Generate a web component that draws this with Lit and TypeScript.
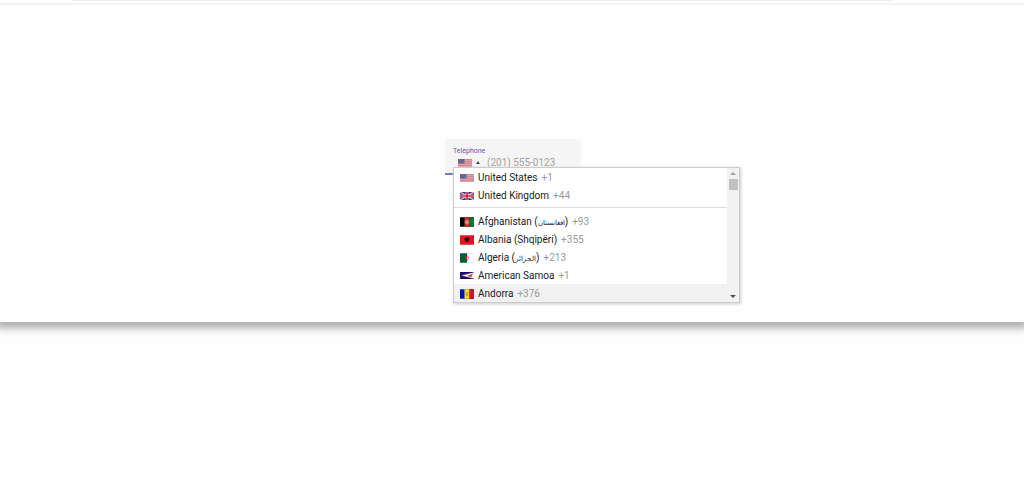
import { LitElement, html, css, svg } from "lit";
import { customElement, state } from "lit/decorators.js";
import { classMap } from "lit/directives/class-map.js";

const flags: Record<string, unknown> = {
  us: svg`<rect width="28" height="16" fill="#e0a0aa"/><path d="M0 1h28M0 5h28M0 9h28M0 13h28" stroke="#d07c8a" stroke-width="1.6"/><rect width="13" height="9" fill="#66668f"/>`,
  gb: svg`<rect width="28" height="16" fill="#29337a"/><path d="M0 0L28 16M28 0L0 16" stroke="#fff" stroke-width="2.600"/><path d="M0 0L28 16M28 0L0 16" stroke="#d8294a" stroke-width="1"/><path d="M14 0V16M0 8H28" stroke="#fff" stroke-width="5.200"/><path d="M14 0V16M0 8H28" stroke="#d01c36" stroke-width="3.2"/>`,
  af: svg`<rect width="28" height="19" fill="#000"/><rect x="9" width="10" height="19" fill="#c8301c"/><rect x="19" width="9" height="19" fill="#007a36"/><circle cx="14" cy="9.5" r="4" fill="none" stroke="#e7a79c" stroke-width="1.4"/><path d="M12 8h4v4h-4z" fill="#e7a79c"/>`,
  al: svg`<rect width="28" height="19" fill="#e8121e"/><path d="M13 5l-2-1-1 1 1 1-3 0 1 2 1 3 2-1-1 3 2 0 1 2 1-2 2 0-1-3 2 1 1-3 1-2-3 0 1-1-1-1-2 1-1 1z" fill="#2a0806"/>`,
  dz: svg`<rect width="28" height="19" fill="#fff"/><rect width="14" height="19" fill="#006233"/><path d="M17.500 5.300A5 5 0 1 0 17.500 13.700A4 4 0 1 1 17.500 5.300z" fill="#d21034"/><path d="M14.500 9.500l4-1.300-2.400 3.400V7.400l2.400 3.400z" fill="#d21034"/><path d="M14 .5H27.500V18.500H14" fill="none" stroke="#ddd"/>`,
  as: svg`<rect width="28" height="14" fill="#10106e"/><path d="M28 0L0 7l28 7z" fill="#c5203a"/><path d="M28 1.200L4 7l24 5.800z" fill="#fff"/><path d="M15 6l5 0 5-3 1 1-3 3 2 1-3 2-3-1-4 0 2-1z" fill="#8b5a3c"/>`,
  ad: svg`<rect width="28" height="19" fill="#0018a8"/><rect x="9" width="10" height="19" fill="#fedd00"/><rect x="19" width="9" height="19" fill="#d0103a"/><path d="M11.500 6h5v5q0 2-2.500 3-2.500-1-2.500-3z" fill="#c69a55"/>`,
};
const flagHeights: Record<string, number> = { us: 16, gb: 16, as: 14 };

const flag = (code: string) => {
  const h = flagHeights[code] ?? 19;
  return html`<svg class="flag" viewBox="0 0 28 ${h}" width="14" height=${Math.round(h / 2)} aria-hidden="true">${flags[code]}</svg>`;
};

interface Country {
  code: string;
  name: string;
  native?: string;
  dial: string;
}

const preferred: Country[] = [
  { code: "us", name: "United States", dial: "+1" },
  { code: "gb", name: "United Kingdom", dial: "+44" },
];
const countries: Country[] = [
  { code: "af", name: "Afghanistan", native: "افغانستان", dial: "+93" },
  { code: "al", name: "Albania", native: "Shqipëri", dial: "+355" },
  { code: "dz", name: "Algeria", native: "الجزائر", dial: "+213" },
  { code: "as", name: "American Samoa", dial: "+1" },
  { code: "ad", name: "Andorra", dial: "+376" },
];

@customElement("app-root")
export class AppRoot extends LitElement {
  @state() private active = "ad";
  @state() private open = true;

  static styles = css`
    :host {
      display: block;
      min-height: 100vh;
      background: #fefefe;
      font: 10px/18px Roboto, "Liberation Sans", sans-serif;
      color: #212121;
    }
    * { box-sizing: border-box; }
    .topbar { height: 5px; border-bottom: 2px solid #f3f3f3; }
    .tab-edge { height: 1px; margin: 0 13% 0 7%; background: #f0f0f0; }
    .page {
      display: flex;
      justify-content: center;
      padding: 134px 0 147px 2px;
      background: #fefefe;
      border-bottom: 1px solid #bbb;
      box-shadow: 0 1px 8px 4px #aaa;
      clip-path: inset(0 0 -20px 0);
    }
    .field {
      position: relative;
      width: 136px;
      padding: 8px 8px 4px;
      background: #f5f5f5;
      border-radius: 3px 3px 0 0;
      border-bottom: 2px solid #6a78d4;
    }
    label { display: block; font-size: 7px; line-height: 9px; color: #6558b0; }
    .entry { display: flex; align-items: center; height: 13px; }
    button { padding: 0; border: 0; background: none; display: flex; align-items: center; }
    .country { gap: 4px; padding: 0 7px 0 5px; }
    .flag { display: block; flex: none; }
    input {
      flex: 1;
      min-width: 0;
      padding: 0;
      border: 0;
      outline: 0;
      background: none;
      font: inherit;
      line-height: 13px;
      color: inherit;
    }
    input::placeholder { color: #a3a3a3; opacity: 1; }
    .menu {
      position: absolute;
      top: 28px;
      left: 8px;
      display: flex;
      width: 287px;
      background: #fff;
      border: 1px solid #ccc;
      box-shadow: 1px 1px 3px #ccc;
    }
    .list { flex: 1; height: 134px; margin: 0; padding: 0; overflow: hidden; list-style: none; }
    .option { display: flex; align-items: center; height: 18px; padding: 1px 6px 0; gap: 4px; white-space: nowrap; }
    .option.active { background: #f1f1f1; }
    bdi:dir(rtl) { font-size: 7px; line-height: 8px; }
    .dial { color: #999; }
    .divider { height: 8px; padding-top: 3px; }
    .divider::before { content: ""; display: block; border-top: 1px solid #dcdcdc; }
    .scroll {
      display: flex;
      flex-direction: column;
      align-items: center;
      width: 12px;
      background: #f2f2f2;
    }
    .scroll button { width: 12px; height: 11px; justify-content: center; }
    .thumb { width: 9px; height: 11px; background: #c1c1c1; }
    .space { flex: 1; }
  `;

  private option(c: Country) {
    return html`<li class=${classMap({ option: true, active: c.code === this.active })} role="option"
      aria-selected=${c.code === this.active} @mouseenter=${() => (this.active = c.code)}>
      ${flag(c.code)}<span>${c.name}${c.native ? html` (<bdi>${c.native}</bdi>)` : ""}</span><span class="dial">${c.dial}</span>
    </li>`;
  }

  render() {
    return html`
      <header class="topbar"><div class="tab-edge"></div></header>
      <main class="page">
        <div class="field">
          <label for="phone">Telephone</label>
          <div class="entry">
            <button class="country" aria-label="Country: United States" aria-haspopup="listbox"
              aria-expanded=${this.open} @click=${() => (this.open = !this.open)}>
              ${flag("us")}
              <svg width="4" height="3" viewBox="0 0 4 3"><path d="M0 3L2 0L4 3z" fill="#444" /></svg>
            </button>
            <input id="phone" type="tel" placeholder="(201) 555-0123" />
          </div>
          ${this.open
            ? html`<div class="menu">
                <ul class="list" role="listbox" aria-label="Country">
                  ${preferred.map((c) => this.option(c))}
                  <li class="divider" role="separator"></li>
                  ${countries.map((c) => this.option(c))}
                </ul>
                <div class="scroll">
                  <button aria-label="Scroll up" tabindex="-1">
                    <svg width="6" height="3" viewBox="0 0 6 3"><path d="M0 3L3 0L6 3z" fill="#a3a3a3" /></svg>
                  </button>
                  <div class="thumb"></div>
                  <div class="space"></div>
                  <button aria-label="Scroll down" tabindex="-1">
                    <svg width="6" height="3" viewBox="0 0 6 3"><path d="M0 0L3 3L6 0z" fill="#505050" /></svg>
                  </button>
                </div>
              </div>`
            : ""}
        </div>
      </main>
    `;
  }
}
